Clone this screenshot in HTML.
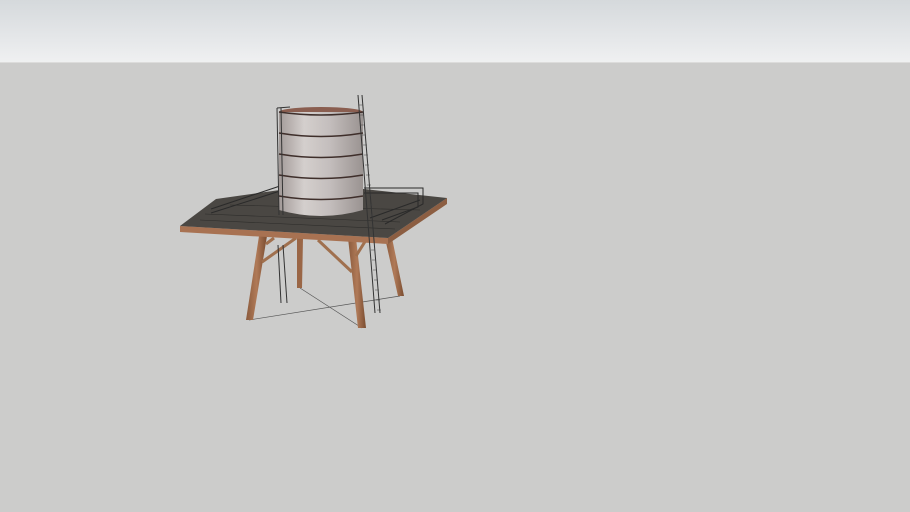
<!DOCTYPE html>
<html><head><style>
html,body{margin:0;padding:0;width:910px;height:512px;overflow:hidden;background:#cccccb}
.sky{position:absolute;left:0;top:0;width:910px;height:62px;background:linear-gradient(#d5d9dc,#eff0f1)}
.hz{position:absolute;left:0;top:62px;width:910px;height:1px;background:#dcdcdb}
svg{position:absolute;left:0;top:0}
</style></head><body>
<div class="sky"></div><div class="hz"></div>
<svg width="910" height="512" viewBox="0 0 910 512">
<defs>
<linearGradient id="tank" x1="0" x2="1">
<stop offset="0" stop-color="#a29a98"/><stop offset=".3" stop-color="#d4cfcd"/><stop offset=".6" stop-color="#c4bebd"/><stop offset="1" stop-color="#9a9391"/>
</linearGradient>
<linearGradient id="wood" x1="0" x2="1"><stop offset="0" stop-color="#8a5a3c"/><stop offset=".5" stop-color="#b07a58"/><stop offset="1" stop-color="#7a4c30"/></linearGradient>
</defs>
<g stroke="#555" stroke-width=".7" fill="none">
<path d="M249 320 L400 296"/><path d="M300 288 L362 328"/>
</g>
<path d="M297 238 L303 238 L302 288 L297 288Z" fill="#9a6646"/>
<g fill="url(#wood)">
<path d="M259 236 L267 236 L253 320 L246 320Z"/>
<path d="M348 238 L356 238 L366 328 L358 328Z"/>
<path d="M385 238 L392 238 L404 296 L398 296Z"/>
</g>
<g stroke="#a0704e" stroke-width="3" fill="none">
<path d="M262 262 L296 238"/><path d="M266 244 L274 238"/><path d="M352 272 L318 240"/><path d="M356 256 L366 240"/>
</g>
<path d="M180 226 L388 238 L388 244 L180 232Z" fill="#a87252"/>
<path d="M388 238 L447 198 L447 204 L388 244Z" fill="#8c5e42"/>
<path d="M180 226 L216 199 L280 190 L364 189 L447 198 L388 238Z" fill="#4a4743"/>
<g stroke="#2d2c2a" stroke-width=".6" fill="none">
<path d="M205 214 L400 222"/><path d="M200 220 L395 229"/><path d="M230 205 L420 210"/>
</g>
<g stroke="#2a2a2a" stroke-width="1" fill="none">
<path d="M211 209 L280 186"/><path d="M211 213 L280 191"/>
<path d="M364 188 L423 188 L423 204 L385 224"/><path d="M364 193 L418 193 L418 207 L382 220"/>
<path d="M370 218 L420 200"/>
</g>
<ellipse cx="321" cy="112" rx="42" ry="5" fill="#8a5e50"/>
<path d="M279 112 L363 112 L363 210 Q321 222 279 210Z" fill="url(#tank)"/>
<g stroke="#3e2e2a" stroke-width="1.6" fill="none">
<path d="M279 133 Q321 140 363 133"/><path d="M279 154 Q321 161 363 154"/><path d="M279 175 Q321 182 363 175"/><path d="M279 196 Q321 203 363 196"/>
<path d="M279 112 Q321 118 363 112"/>
</g>
<g stroke="#333" stroke-width="1" fill="none">
<path d="M277 108 L279 215"/><path d="M281 108 L283 215"/><path d="M277 108 L290 107"/>
<path d="M358 95 L375 313"/><path d="M362 95 L380 313"/>
<path d="M278 245 L281 303"/><path d="M283 245 L287 303"/>
</g>
<g stroke="#444" stroke-width=".6">
<path d="M359 105h4M360 115h4M361 125h4M362 135h4M363 145h4M364 155h4M365 165h4M366 175h4M367 185h4M368 195h4M369 205h4M370 215h4M371 250h4M372 260h4M373 270h4M374 280h4M375 290h4M376 300h4M377 310h4"/>
</g>
</svg>
</body></html>
